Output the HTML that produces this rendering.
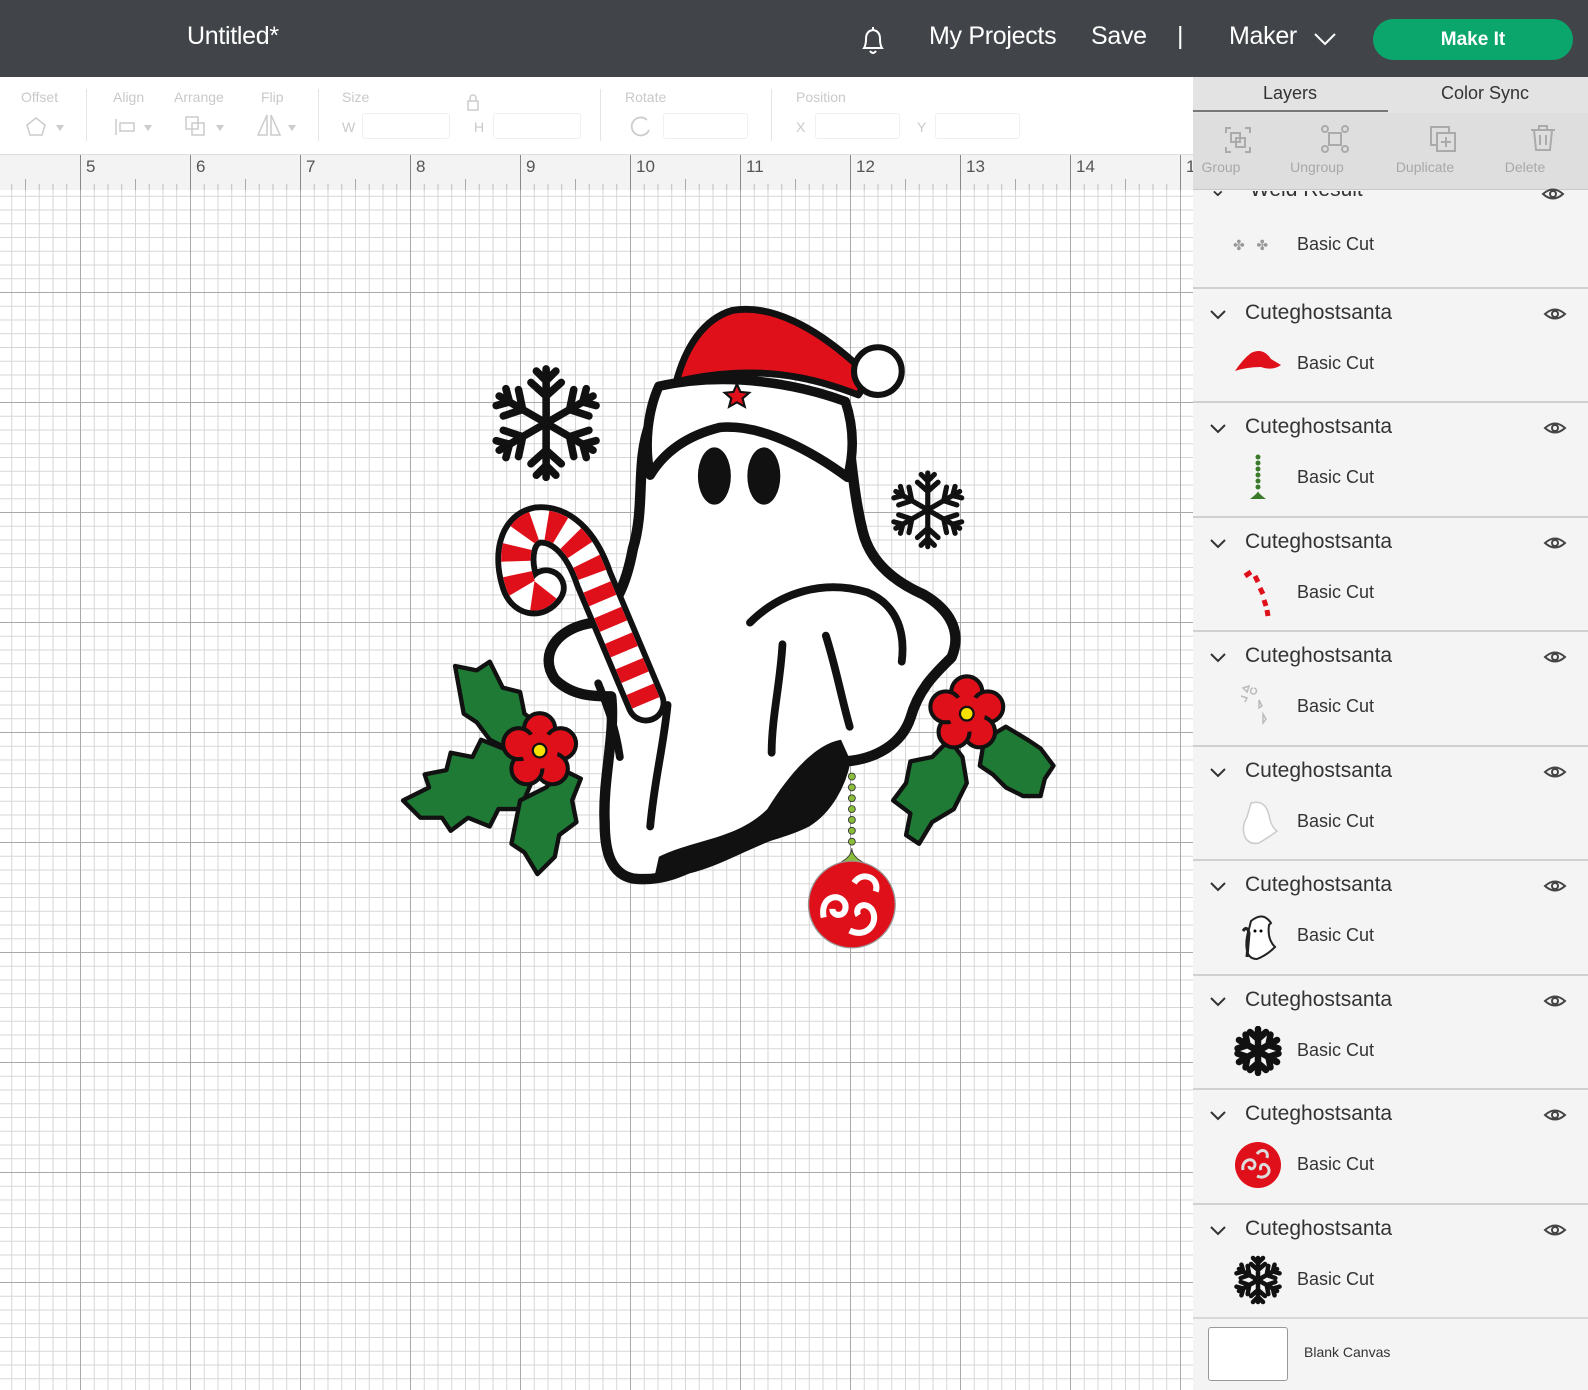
<!DOCTYPE html>
<html><head><meta charset="utf-8"><style>
*{margin:0;padding:0;box-sizing:border-box}
body{width:1588px;height:1390px;overflow:hidden;font-family:"Liberation Sans",sans-serif;background:#fff;position:relative}
.hdr{position:absolute;left:0;top:0;width:1588px;height:77px;background:#414449;color:#fff}
.hdr span{position:absolute;top:22px;font-size:25px;letter-spacing:-0.3px}
.btn{position:absolute;left:1373px;top:19px;width:200px;height:41px;border-radius:21px;background:#0aa66c;color:#fff;font-size:19px;font-weight:bold;text-align:center;line-height:41px}
.tb{position:absolute;left:0;top:77px;width:1193px;height:77px;background:#fff;color:#c9c9c9;font-size:14px}
.tb .l{position:absolute;top:12px}
.tb .sep{position:absolute;top:12px;width:1px;height:52px;background:#e4e4e4}
.tb .box{position:absolute;top:36px;height:26px;border:1px solid #f0f0f0;border-radius:3px}
.ruler{position:absolute;left:0;top:154px;width:1193px;height:36px;background:#f3f3f3;border-top:1px solid #ddd;overflow:hidden;
background-image:linear-gradient(90deg,#888 1px,transparent 1px),linear-gradient(90deg,#aaa 1px,transparent 1px),linear-gradient(90deg,#bbb 1px,transparent 1px);
background-size:110px 36px,55px 12px,13.75px 7px;background-position:80px 0,80px 24px,80px 29px;background-repeat:repeat-x}
.ruler span{position:absolute;top:2px;font-size:17px;color:#555}
.canvas{position:absolute;left:0;top:190px;width:1193px;height:1200px;background-color:#fff;
background-image:linear-gradient(90deg,#a9a9a9 1px,transparent 1px),linear-gradient(#a9a9a9 1px,transparent 1px),linear-gradient(90deg,#d6d6d6 1px,transparent 1px),linear-gradient(#d6d6d6 1px,transparent 1px);
background-size:110px 110px,110px 110px,13.75px 13.75px,13.75px 13.75px;background-position:80px 102px,80px 102px,80px 102px,80px 102px}
.panel{position:absolute;left:1193px;top:77px;width:395px;height:1313px;background:#f4f4f4}
.tabs{position:absolute;left:0;top:0;width:395px;height:36px;background:#e3e3e3;font-size:18px;color:#333}
.tools{position:absolute;left:0;top:36px;width:395px;height:77px;background:#dedede;border-bottom:1px solid #c8c8c8;font-size:14px;color:#a8a8a8}
.tools div{position:absolute;top:46px;text-align:center;width:90px}
.row{position:absolute;left:0;width:395px;height:115px;border-top:2px solid #d0d0d0}
.row .t{position:absolute;left:52px;top:12px;font-size:21px;color:#333}
.row .c{position:absolute;left:104px;top:64px;font-size:18px;color:#333}
.row .ch{position:absolute;left:16px;top:20px}
.row .eye{position:absolute;left:350px;top:18px}
.row .ic{position:absolute;left:40px;top:50px;width:50px;height:50px}
</style></head><body>
<div class="hdr">
<span style="left:187px">Untitled*</span>
<svg style="position:absolute;left:858px;top:25px" width="30" height="32" viewBox="0 0 30 32"><path d="M6 23 Q8 20 8 14 Q8 6 15 5 Q22 6 22 14 Q22 20 24 23 Z M12 26 Q15 30 18 26" fill="none" stroke="#fff" stroke-width="2"/><path d="M15 2v3" stroke="#fff" stroke-width="2"/></svg>
<span style="left:929px">My Projects</span>
<span style="left:1091px">Save</span>
<span style="left:1177px">|</span>
<span style="left:1229px">Maker</span>
<svg style="position:absolute;left:1313px;top:32px" width="24" height="14" viewBox="0 0 24 14"><path d="M2 2l10 10 10-10" fill="none" stroke="#fff" stroke-width="2"/></svg>
<div class="btn">Make It</div>
</div>
<div class="tb">
<div class="l" style="left:21px">Offset</div>
<svg style="position:absolute;left:24px;top:38px" width="42" height="24"><polygon points="12,3 21,10 18,20 6,20 3,10" fill="none" stroke="#ccc" stroke-width="1.5"/><path d="M32 10l4 6 4-6z" fill="#ccc"/></svg>
<div class="sep" style="left:86px"></div>
<div class="l" style="left:113px">Align</div>
<svg style="position:absolute;left:114px;top:40px" width="42" height="22"><path d="M2 2v16M6 6h14v8H6z" fill="none" stroke="#ccc" stroke-width="1.5"/><path d="M30 8l4 6 4-6z" fill="#ccc"/></svg>
<div class="l" style="left:174px">Arrange</div>
<svg style="position:absolute;left:184px;top:38px" width="44" height="24"><path d="M2 2h12v12H2zM8 8h12v12H8z" fill="none" stroke="#ccc" stroke-width="1.5"/><path d="M32 10l4 6 4-6z" fill="#ccc"/></svg>
<div class="l" style="left:261px">Flip</div>
<svg style="position:absolute;left:256px;top:36px" width="42" height="26"><path d="M11 2L2 22h9zM15 2l9 20h-9z" fill="none" stroke="#ccc" stroke-width="1.5"/><path d="M32 12l4 6 4-6z" fill="#ccc"/></svg>
<div class="sep" style="left:318px"></div>
<div class="l" style="left:342px">Size</div>
<div class="l" style="left:342px;top:42px">W</div><div class="box" style="left:362px;width:88px"></div>
<svg style="position:absolute;left:466px;top:16px" width="14" height="18"><rect x="2" y="8" width="10" height="9" fill="none" stroke="#ccc" stroke-width="1.5"/><path d="M4 8V5a3 3 0 0 1 6 0v3" fill="none" stroke="#ccc" stroke-width="1.5"/></svg>
<div class="l" style="left:474px;top:42px">H</div><div class="box" style="left:493px;width:88px"></div>
<div class="sep" style="left:600px"></div>
<div class="l" style="left:625px">Rotate</div>
<svg style="position:absolute;left:627px;top:37px" width="26" height="26"><path d="M20 6A9 9 0 1 0 22 16" fill="none" stroke="#ccc" stroke-width="1.8"/></svg>
<div class="box" style="left:663px;width:85px"></div>
<div class="sep" style="left:771px"></div>
<div class="l" style="left:796px">Position</div>
<div class="l" style="left:796px;top:42px">X</div><div class="box" style="left:815px;width:85px"></div>
<div class="l" style="left:917px;top:42px">Y</div><div class="box" style="left:935px;width:85px"></div>
</div>
<div class="ruler">
<span style="left:86px">5</span><span style="left:196px">6</span><span style="left:306px">7</span><span style="left:416px">8</span><span style="left:526px">9</span><span style="left:636px">10</span><span style="left:746px">11</span><span style="left:856px">12</span><span style="left:966px">13</span><span style="left:1076px">14</span><span style="left:1186px">1</span>
</div>
<div class="canvas"></div>

<svg style="position:absolute;left:390px;top:280px" width="680" height="690" viewBox="0 0 1568 1591">
<defs>
<g id="sf" stroke="#111" stroke-width="14" stroke-linecap="round" fill="none">
<g id="arm"><path d="M0 0V-100M0-50L-28-75M0-50L28-75M0-78L-18-96M0-78L18-96"/></g>
<use href="#arm" transform="rotate(60)"/><use href="#arm" transform="rotate(120)"/><use href="#arm" transform="rotate(180)"/><use href="#arm" transform="rotate(240)"/><use href="#arm" transform="rotate(300)"/>
</g>
<g id="flw"><g fill="#e0101a" stroke="#111" stroke-width="9">
<circle cx="0" cy="-48" r="34"/><circle cx="46" cy="-15" r="34"/><circle cx="28" cy="40" r="34"/><circle cx="-28" cy="40" r="34"/><circle cx="-46" cy="-15" r="34"/></g>
<circle r="40" fill="#e0101a"/><circle r="15" fill="#f5e000" stroke="#111" stroke-width="5"/></g>
</defs>
<use href="#sf" transform="translate(360,330) scale(1.25)"/>
<use href="#sf" transform="translate(1240,530) scale(0.85)"/>
<g fill="#1e7a35" stroke="#111" stroke-width="10" stroke-linejoin="round">
<path d="M30 1200 L90 1170 80 1140 130 1130 140 1090 190 1100 210 1060 260 1080 300 1090 330 1150 300 1220 250 1220 230 1260 180 1240 140 1270 120 1240 70 1240 Z"/>
<path d="M150 890 L200 900 230 880 260 940 300 950 310 1000 350 1030 320 1090 270 1080 230 1060 200 1020 170 1000 Z"/>
<path d="M300 1200 L360 1170 400 1130 440 1150 420 1200 430 1250 390 1280 380 1330 340 1370 310 1320 280 1300 290 1250 Z"/>
</g>
<use href="#flw" transform="translate(345,1085) scale(1.05)"/>
<g fill="#1e7a35" stroke="#111" stroke-width="10" stroke-linejoin="round">
<path d="M1290 1060 L1250 1100 1200 1110 1190 1160 1160 1200 1200 1230 1190 1280 1220 1300 1250 1250 1300 1220 1330 1160 1320 1100 Z"/>
<path d="M1370 1060 L1420 1030 1470 1060 1500 1080 1530 1120 1510 1150 1500 1190 1460 1190 1420 1170 1390 1140 1360 1120 Z"/>
</g>
<use href="#flw" transform="translate(1330,1000) scale(1.05)"/>
<!-- ghost body -->
<path d="M600 330 C565 420 590 520 560 620 C545 700 520 760 470 790 C390 800 340 860 380 920 C420 960 470 960 510 960 C520 1050 490 1150 495 1250 C495 1320 510 1370 560 1380 C640 1390 700 1350 760 1320 C830 1290 900 1280 960 1250 C1010 1220 1040 1160 1050 1110 C1120 1105 1180 1070 1200 1010 C1220 940 1260 905 1295 870 C1320 810 1290 760 1230 725 C1150 690 1105 640 1090 580 C1070 500 1065 420 1055 350 Z" fill="#fff" stroke="#111" stroke-width="24" stroke-linejoin="round"/>
<path d="M620 1330 C700 1290 800 1290 870 1220 C920 1140 980 1070 1040 1060 L1058 1100 C1045 1200 990 1260 900 1285 C800 1320 710 1385 610 1375 Z" fill="#111"/>
<g fill="none" stroke="#111" stroke-width="18" stroke-linecap="round">
<path d="M830 790 C900 720 1000 690 1100 720 C1160 745 1190 800 1180 880"/>
<path d="M905 840 C900 930 880 1010 880 1090"/>
<path d="M1005 820 C1030 900 1040 960 1060 1030"/>
<path d="M480 930 C500 980 520 1030 530 1100"/>
<path d="M640 980 C630 1080 610 1150 600 1260"/>
</g>
<!-- candy cane (in front) -->
<g fill="none" stroke-linecap="round">
<path d="M590 975 L470 690 C440 600 390 560 340 565 C290 575 280 640 300 700 C310 730 340 740 360 710" stroke="#111" stroke-width="95"/>
<path d="M590 975 L470 690 C440 600 390 560 340 565 C290 575 280 640 300 700 C310 730 340 740 360 710" stroke="#fff" stroke-width="68"/>
<path d="M590 975 L470 690 C440 600 390 560 340 565 C290 575 280 640 300 700 C310 730 340 740 360 710" stroke="#e0101a" stroke-width="68" stroke-dasharray="34 30" stroke-linecap="butt"/>
</g>
<path d="M620 245 C780 210 940 240 1050 280 C1070 340 1070 400 1055 455 C980 400 860 330 760 340 C680 360 630 400 600 450 C585 380 595 300 620 245 Z" fill="#fff" stroke="#111" stroke-width="22" stroke-linejoin="round"/>
<path d="M660 235 C680 160 720 90 790 70 C880 55 980 110 1070 190 C1090 215 1095 245 1080 265 C990 230 900 210 800 215 C740 218 700 225 660 235 Z" fill="#e0101a" stroke="#111" stroke-width="16" stroke-linejoin="round"/>
<circle cx="1125" cy="210" r="55" fill="#fff" stroke="#111" stroke-width="14"/>
<polygon points="800,240 808,258 828,260 813,273 818,292 800,282 782,292 787,273 772,260 792,258" fill="#e0101a" stroke="#111" stroke-width="5"/>
<ellipse cx="748" cy="452" rx="38" ry="66" fill="#111"/>
<ellipse cx="862" cy="452" rx="38" ry="66" fill="#111"/>
<g fill="#8bbd3c" stroke="#333" stroke-width="2">
<circle cx="1065" cy="1145" r="8"/><circle cx="1065" cy="1170" r="8"/><circle cx="1065" cy="1195" r="8"/><circle cx="1065" cy="1220" r="8"/><circle cx="1065" cy="1245" r="8"/><circle cx="1065" cy="1270" r="8"/><circle cx="1065" cy="1295" r="8"/>
<path d="M1035 1345 Q1065 1330 1065 1310 Q1065 1330 1095 1345 Z"/></g>
<circle cx="1065" cy="1440" r="100" fill="#e0101a" stroke="#999" stroke-width="3"/>
<g fill="none" stroke="#fff" stroke-width="14"><path d="M1000 1470 C990 1420 1040 1410 1050 1440 C1055 1470 1020 1470 1020 1450"/><path d="M1060 1500 C1100 1520 1130 1480 1110 1450 C1090 1430 1070 1450 1080 1465"/><path d="M1070 1390 C1090 1360 1130 1380 1120 1410"/></g>
</svg>

<div class="panel">
<div class="tabs"><span style="position:absolute;left:70px;top:6px">Layers</span><span style="position:absolute;left:248px;top:6px">Color Sync</span><div style="position:absolute;left:0;top:33px;width:195px;height:2px;background:#777"></div></div>
<div class="tools">
<svg style="position:absolute;left:30px;top:12px" width="30" height="30" viewBox="0 0 30 30" fill="none" stroke="#aaa" stroke-width="2"><path d="M3 8V3h5M22 3h5v5M27 22v5h-5M8 27H3v-5"/><rect x="8" y="8" width="9" height="9"/><rect x="13" y="13" width="9" height="9"/></svg>
<svg style="position:absolute;left:126px;top:10px" width="32" height="32" viewBox="0 0 32 32" fill="none" stroke="#aaa" stroke-width="2"><circle cx="6" cy="6" r="3"/><circle cx="26" cy="6" r="3"/><circle cx="6" cy="26" r="3"/><circle cx="26" cy="26" r="3"/><rect x="10" y="10" width="12" height="12"/></svg>
<svg style="position:absolute;left:234px;top:10px" width="32" height="32" viewBox="0 0 32 32" fill="none" stroke="#aaa" stroke-width="2"><rect x="4" y="4" width="18" height="18"/><rect x="10" y="10" width="18" height="18" fill="#dedede"/><path d="M19 14v10M14 19h10"/></svg>
<svg style="position:absolute;left:334px;top:9px" width="32" height="32" viewBox="0 0 32 32" fill="none" stroke="#aaa" stroke-width="2"><path d="M4 8h24M12 8V4h8v4M7 8l2 20h14l2-20M13 13v10M19 13v10"/></svg>
<div style="left:-17px">Group</div><div style="left:79px">Ungroup</div><div style="left:187px">Duplicate</div><div style="left:287px">Delete</div>
</div>
<div style="position:absolute;left:16px;top:114px;font-size:21px;color:#333;height:10px;overflow:hidden"><div style="margin-top:-14px">⌄&nbsp;&nbsp;&nbsp;&nbsp;Weld Result</div></div>
<svg style="position:absolute;left:348px;top:110px" width="24" height="14"><path d="M2 7Q12-2 22 7Q12 16 2 7Z" fill="none" stroke="#444" stroke-width="2"/><circle cx="12" cy="7" r="3" fill="none" stroke="#444" stroke-width="2"/></svg>
<div style="position:absolute;left:40px;top:160px;color:#999;font-size:14px">✤&nbsp;&nbsp;&nbsp;✤</div>
<div style="position:absolute;left:104px;top:157px;font-size:18px;color:#333">Basic Cut</div>
</div>

<div id="rows"></div>
<script>
var icons=[
'<svg class="ic" viewBox="0 0 50 50"><path d="M2 32Q10 20 18 14Q30 8 38 20L48 26Q40 32 28 28Q14 28 2 32Z" fill="#e0101a"/></svg>',
'<svg class="ic" viewBox="0 0 50 50"><g fill="#3a7a2a"><circle cx="25" cy="4" r="2.5"/><circle cx="25" cy="10" r="2.5"/><circle cx="25" cy="16" r="2.5"/><circle cx="25" cy="22" r="2.5"/><circle cx="25" cy="28" r="2.5"/><circle cx="25" cy="34" r="2.5"/><path d="M17 46Q25 40 25 38Q25 40 33 46Z"/></g></svg>',
'<svg class="ic" viewBox="0 0 50 50"><g stroke="#e0101a" stroke-width="5"><path d="M12 8l6-4M22 8l3 6M27 20l3 6M31 32l2 6M34 42l1 6"/></g></svg>',
'<svg class="ic" viewBox="0 0 50 50"><g fill="none" stroke="#bbb" stroke-width="1.5"><path d="M10 6l6-2-2 6zM20 6a3 3 0 1 0 1 0M8 14l6 2-2 4M26 18l3 6-3 2zM30 32l3 5-3 4z"/></g></svg>',
'<svg class="ic" viewBox="0 0 50 50"><path d="M18 6Q32 2 36 18Q38 30 44 34Q36 40 26 46Q16 48 12 40Q8 30 14 20Z" fill="#fff" stroke="#ccc" stroke-width="1.5"/></svg>',
'<svg class="ic" viewBox="0 0 50 50"><path d="M18 10Q30 0 38 12L36 14Q34 28 42 36Q34 44 24 48Q16 48 14 40Q12 30 16 18Z" fill="#fff" stroke="#222" stroke-width="2"/><path d="M10 20Q14 14 16 22L14 46" fill="none" stroke="#222" stroke-width="3"/><circle cx="22" cy="20" r="1.5"/><circle cx="28" cy="20" r="1.5"/></svg>',
'<svg class="ic" viewBox="-50 -50 100 100"><use href="#sf2"/></svg>',
'<svg class="ic" viewBox="0 0 50 50"><circle cx="25" cy="25" r="23" fill="#e0101a"/><g fill="none" stroke="#ddd" stroke-width="3"><path d="M10 30C8 20 20 16 22 24C22 30 16 30 16 26"/><path d="M24 36C32 40 40 32 34 26C30 22 26 26 28 30"/><path d="M24 14C28 8 36 10 34 18"/></g></svg>',
'<svg class="ic" viewBox="-50 -50 100 100"><use href="#sf3"/></svg>'];
var y=[287,401,516,630,745,859,974,1088,1203],h='';
for(var i=0;i<9;i++){h+='<div class="row" style="left:1193px;top:'+y[i]+'px;position:absolute"><svg class="ch" width="18" height="12"><path d="M2 2l7 7 7-7" fill="none" stroke="#333" stroke-width="2"/></svg><div class="t">Cuteghostsanta</div><svg class="eye" width="24" height="14"><path d="M2 7Q12-2 22 7Q12 16 2 7Z" fill="none" stroke="#444" stroke-width="2"/><circle cx="12" cy="7" r="3" fill="none" stroke="#444" stroke-width="2"/></svg>'+icons[i]+'<div class="c">Basic Cut</div></div>';}
h+='<div style="position:absolute;left:1193px;top:1317px;width:395px;border-top:2px solid #d8d8d8"></div><div style="position:absolute;left:1208px;top:1327px;width:80px;height:54px;background:#fff;border:1.5px solid #999;border-radius:3px"></div><div style="position:absolute;left:1304px;top:1344px;font-size:14px;color:#333">Blank Canvas</div>';
document.getElementById('rows').innerHTML=h;
</script>
<svg width="0" height="0" style="position:absolute"><defs>
<g id="sf2" stroke="#111" stroke-width="13" stroke-linecap="round"><g id="a2"><path d="M0 0V-44M0-24L-16-38M0-24L16-38"/></g><use href="#a2" transform="rotate(60)"/><use href="#a2" transform="rotate(120)"/><use href="#a2" transform="rotate(180)"/><use href="#a2" transform="rotate(240)"/><use href="#a2" transform="rotate(300)"/></g>
<g id="sf3" stroke="#111" stroke-width="9" stroke-linecap="round"><g id="a3"><path d="M0 0V-44M0-20L-14-32M0-20L14-32M0-34L-10-44M0-34L10-44"/></g><use href="#a3" transform="rotate(60)"/><use href="#a3" transform="rotate(120)"/><use href="#a3" transform="rotate(180)"/><use href="#a3" transform="rotate(240)"/><use href="#a3" transform="rotate(300)"/></g>
</defs></svg>
</body></html>
